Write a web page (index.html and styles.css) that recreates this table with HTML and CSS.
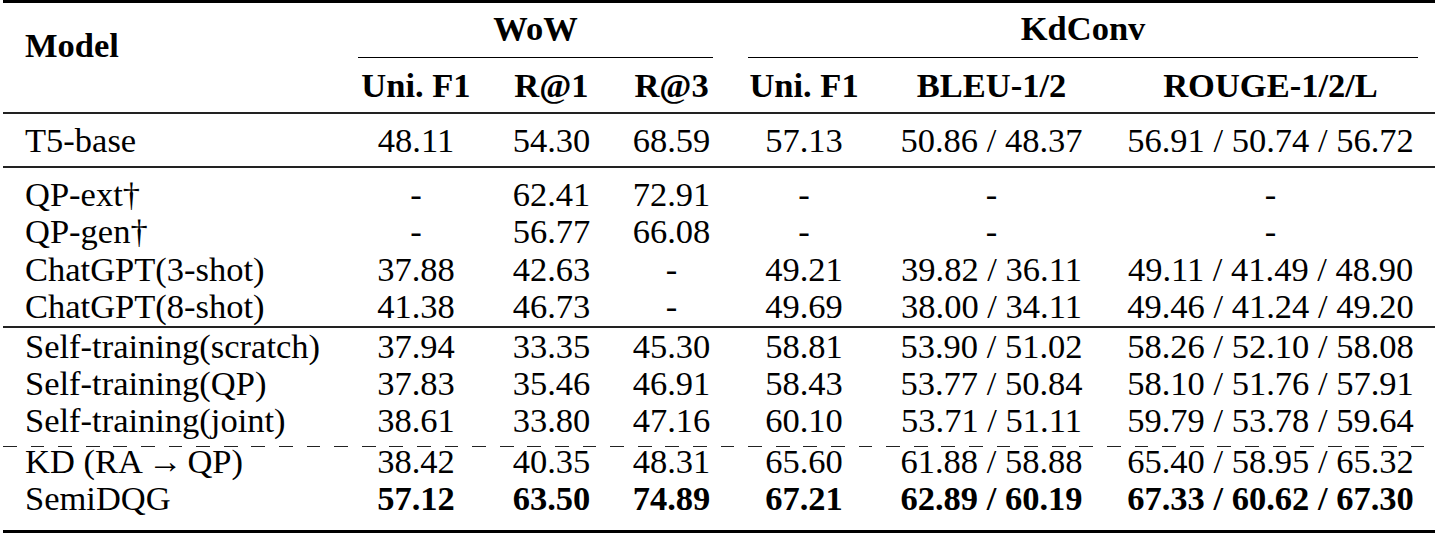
FILE: index.html
```html
<!DOCTYPE html>
<html lang="en">
<head>
    <meta charset="UTF-8" />
    <title>Results</title>
    <link rel="stylesheet" href="styles.css">
</head>
<body>
    <table class="results">
        <colgroup>
            <col class="c-model">
            <col class="c-uni">
            <col class="c-r1">
            <col class="c-r3">
            <col class="c-kuni">
            <col class="c-bleu">
            <col class="c-rouge">
        </colgroup>
        <thead>
            <tr class="head-top">
                <th rowspan="2" class="model">Model</th>
                <th colspan="3" class="group"><div class="grp wow">WoW</div></th>
                <th colspan="4" class="group"><div class="grp kdconv">KdConv</div></th>
            </tr>
            <tr class="head-sub">
                <th>Uni. F1</th>
                <th>R@1</th>
                <th>R@3</th>
                <th>Uni. F1</th>
                <th>BLEU-1/2</th>
                <th>ROUGE-1/2/L</th>
            </tr>
        </thead>
        <tbody class="base">
            <tr><td>T5-base</td><td>48.11</td><td>54.30</td><td>68.59</td><td>57.13</td><td>50.86 / 48.37</td><td>56.91 / 50.74 / 56.72</td></tr>
        </tbody>
        <tbody class="others">
            <tr><td>QP-ext†</td><td>-</td><td>62.41</td><td>72.91</td><td>-</td><td>-</td><td>-</td></tr>
            <tr><td>QP-gen†</td><td>-</td><td>56.77</td><td>66.08</td><td>-</td><td>-</td><td>-</td></tr>
            <tr><td>ChatGPT(3-shot)</td><td>37.88</td><td>42.63</td><td>-</td><td>49.21</td><td>39.82 / 36.11</td><td>49.11 / 41.49 / 48.90</td></tr>
            <tr><td>ChatGPT(8-shot)</td><td>41.38</td><td>46.73</td><td>-</td><td>49.69</td><td>38.00 / 34.11</td><td>49.46 / 41.24 / 49.20</td></tr>
        </tbody>
        <tbody class="self">
            <tr><td>Self-training(scratch)</td><td>37.94</td><td>33.35</td><td>45.30</td><td>58.81</td><td>53.90 / 51.02</td><td>58.26 / 52.10 / 58.08</td></tr>
            <tr><td>Self-training(QP)</td><td>37.83</td><td>35.46</td><td>46.91</td><td>58.43</td><td>53.77 / 50.84</td><td>58.10 / 51.76 / 57.91</td></tr>
            <tr><td>Self-training(joint)</td><td>38.61</td><td>33.80</td><td>47.16</td><td>60.10</td><td>53.71 / 51.11</td><td>59.79 / 53.78 / 59.64</td></tr>
        </tbody>
        <tbody class="final">
            <tr class="kd"><td>KD (RA<span class="arrow">→</span>QP)</td><td>38.42</td><td>40.35</td><td>48.31</td><td>65.60</td><td>61.88 / 58.88</td><td>65.40 / 58.95 / 65.32</td></tr>
            <tr class="ours"><td>SemiDQG</td><td><b>57.12</b></td><td><b>63.50</b></td><td><b>74.89</b></td><td><b>67.21</b></td><td><b>62.89 / 60.19</b></td><td><b>67.33 / 60.62 / 67.30</b></td></tr>
        </tbody>
    </table>
</body>
</html>
```

FILE: styles.css
```css
body {
    margin: 0;
    padding: 0 0 0 3px;
    background: #fff;
    color: #000;
    font-family: "Liberation Serif", "Times New Roman", serif;
    font-size: 34.5px;
}

.results {
    border-collapse: separate;
    border-spacing: 0;
    table-layout: fixed;
    width: 1432px;
    border-top: 3px solid #000;
    border-bottom: 3px solid #000;
}

.c-model { width: 338px; }
.c-uni { width: 150px; }
.c-r1 { width: 121px; }
.c-r3 { width: 119px; }
.c-kuni { width: 146px; }
.c-bleu { width: 229px; }
.c-rouge { width: 329px; }

th, td {
    padding: 0;
    line-height: 37.4px;
    text-align: center;
    white-space: nowrap;
}

th {
    font-weight: bold;
}

td:first-child,
th.model {
    text-align: left;
    padding-left: 22px;
}

/* header */
th.model {
    vertical-align: top;
    padding-top: 24px;
    border-bottom: 2px solid #222;
}

.head-top th.group {
    padding-top: 7px;
    vertical-align: top;
}

.grp {
    padding-bottom: 9.6px;
    border-bottom: 1px solid #000;
}

.grp.wow {
    margin: 0 18px 0 17px;
}

.grp.kdconv {
    margin: 0 17px;
}

.head-sub th {
    padding-top: 9px;
    padding-bottom: 7.6px;
    border-bottom: 2px solid #222;
}

/* body groups */
.base td {
    padding-top: 7.5px;
    padding-bottom: 7.1px;
    border-bottom: 2px solid #222;
}

.others tr:first-child td {
    padding-top: 8px;
}

.others tr:last-child td {
    border-bottom: 2px solid #222;
}

.kd {
    background: repeating-linear-gradient(90deg, #222 0 13.8px, transparent 13.8px 27.6px) 0 6px / 100% 1px no-repeat;
}

.kd td {
    padding-top: 3px;
}

.arrow {
    margin: 0 5px;
}

.ours td {
    padding-bottom: 12px;
}
```
